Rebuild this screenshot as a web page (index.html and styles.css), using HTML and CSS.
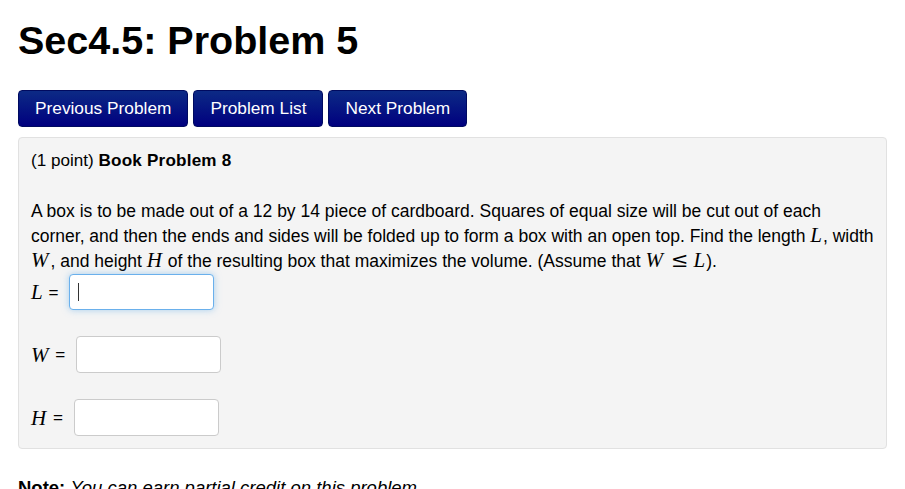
FILE: index.html
```html
<!DOCTYPE html>
<html>
<head>
<meta charset="utf-8">
<title>Sec4.5: Problem 5</title>
<link rel="stylesheet" href="styles.css">
</head>
<body>
<div class="page">
  <h1 class="title">Sec4.5: Problem 5</h1>
  <div class="nav">
    <a class="btn">Previous Problem</a>
    <a class="btn">Problem List</a>
    <a class="btn">Next Problem</a>
  </div>
  <div class="panel">
    <div class="head">(1 point) <b>Book Problem 8</b></div>
    <p class="text">A box is to be made out of a 12 by 14 piece of cardboard. Squares of equal size will be cut out of each corner, and then the ends and sides will be folded up to form a box with an open top. Find the length <span class="m">L</span>, width <span class="m w">W</span>, and height <span class="m">H</span> of the resulting box that maximizes the volume. (Assume that <span class="m w">W</span><span class="le">≤</span><span class="m">L</span>).</p>
    <div class="row row-l"><span class="m">L</span> = <span class="field"><input class="ans focus" type="text"><span class="caret"></span></span></div>
    <div class="row row-w"><span class="m w">W</span> = <span class="field"><input class="ans" type="text"></span></div>
    <div class="row row-h"><span class="m h">H</span> = <span class="field"><input class="ans" type="text"></span></div>
  </div>
  <p class="note"><b>Note:</b> <i>You can earn partial credit on this problem.</i></p>
</div>
</body>
</html>
```
FILE: styles.css
```css
html, body {
  margin: 0;
  padding: 0;
  background: #fff;
}
.page {
  padding: 0 18px;
  font-family: "Liberation Sans", Arial, sans-serif;
  color: #000;
}
.title {
  margin: 18px 0 27px;
  font-size: 39.5px;
  line-height: 45px;
  font-weight: bold;
}
.nav {
  display: flex;
  gap: 5px;
}
.btn {
  display: block;
  padding: 7px 16px;
  border: 1px solid #000a60;
  border-radius: 4px;
  background: linear-gradient(#0c2a85, #00007f);
  color: #fff;
  font-size: 17.3px;
  line-height: 21px;
  cursor: pointer;
}
.panel {
  margin-top: 10px;
  background: #f4f4f4;
  border: 1px solid #e1e1e1;
  border-radius: 4px;
  padding: 10px 12px 12px;
  font-size: 17.1px;
  line-height: 25px;
}
.head {
  margin: 0;
}
.head b {
  letter-spacing: 0.2px;
}
.text {
  margin: 26px 0 0;
  font-size: 17.5px;
  line-height: 25px;
}
.m {
  font-family: "Liberation Serif", "Times New Roman", serif;
  font-style: italic;
  font-size: 21px;
  line-height: 20px;
  padding-right: 1px;
}
.m.w {
  padding-right: 2px;
}
.m.h {
  padding-right: 2px;
}
.le {
  font-family: "DejaVu Serif", serif;
  font-size: 21px;
  line-height: 20px;
  margin: 0 5px 0 6px;
}
.row {
  display: flex;
  align-items: center;
  white-space: pre;
}
.row-l { margin-top: 0; }
.row-w { margin-top: 26px; }
.row-h { margin-top: 26px; }
.field {
  position: relative;
  display: inline-block;
  margin-left: 6px;
}
.ans {
  display: block;
  box-sizing: border-box;
  width: 145px;
  height: 37px;
  margin: 0;
  border: 1px solid #cbcbcb;
  border-radius: 4px;
  background: #fff;
  font: 16px "Liberation Sans", Arial, sans-serif;
  padding: 4px 8px;
}
.ans.focus {
  height: 36px;
  border-color: #6ab0ec;
  box-shadow: 0 0 7px rgba(102, 175, 233, 0.55);
  outline: none;
}
.caret {
  position: absolute;
  left: 9px;
  top: 9px;
  width: 1px;
  height: 18px;
  background: #333;
}
.note {
  margin: 28px 0 0;
  font-size: 18.5px;
  line-height: 22px;
}
```
